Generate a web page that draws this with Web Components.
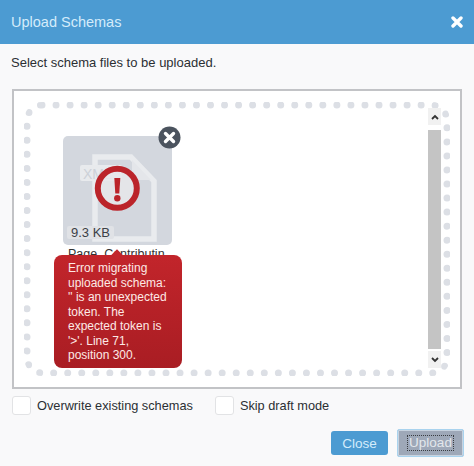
<!DOCTYPE html>
<html>
<head>
<meta charset="utf-8">
<title>Upload Schemas</title>
<style>
html, body { margin: 0; padding: 0; background: #f9f9fa; }
body { font-family: "Liberation Sans", Arial, sans-serif; }
</style>
</head>
<body>
<upload-dialog heading="Upload Schemas">
  <span slot="intro">Select schema files to be uploaded.</span>
  <drop-zone slot="zone">
    <file-tile size="9.3 KB" name="Page_Contributin"></file-tile>
    <error-tip>Error migrating<br>uploaded schema:<br>'' is an unexpected<br>token. The<br>expected token is<br>'&gt;'. Line 71,<br>position 300.</error-tip>
  </drop-zone>
  <check-option slot="options">Overwrite existing schemas</check-option>
  <check-option slot="options">Skip draft mode</check-option>
  <dlg-button slot="actions">Close</dlg-button>
  <dlg-button slot="actions" disabled-look>Upload</dlg-button>
</upload-dialog>

<script>
const dialogTemplate = document.createElement('template');
dialogTemplate.innerHTML = `
<style>
:host {
    display: flex;
    flex-direction: column;
    width: 474px;
    height: 466px;
    box-sizing: border-box;
    background: #f9f9fa;
    color: #2b2f33;
    font-size: 13px;
    overflow: hidden;
}
.head {
    height: 44px;
    flex: none;
    background: #4c9bd2;
    color: #d4ecfb;
    font-size: 14.5px;
    display: flex;
    align-items: center;
    justify-content: space-between;
    padding: 0 11px;
}
.head svg { width: 12px; height: 12px; }
.intro { height: 45px; flex: none; padding: 10px 11px 0; box-sizing: border-box; line-height: 17px; }
.zone { display: block; height: 300px; flex: none; margin: 0 12px; }
.options { display: flex; gap: 22px; height: 19px; margin: 7px 12px 0; flex: none; font-size: 12.75px; }
.actions { display: flex; justify-content: flex-end; align-items: center; gap: 9px; margin: 14px 10px 0 0; flex: none; }
</style>
<div class="head">
    <span class="title"></span>
    <svg viewBox="0 0 12 12"><path d="M2 2l8 8M10 2l-8 8" stroke="#fff" stroke-width="3.4" stroke-linecap="round"/></svg>
</div>
<div class="intro"><slot name="intro"></slot></div>
<div class="zone"><slot name="zone"></slot></div>
<div class="options"><slot name="options"></slot></div>
<div class="actions"><slot name="actions"></slot></div>
`;

class UploadDialog extends HTMLElement {
    constructor() {
        super();
        this.attachShadow({ mode: 'open' });
        this.shadowRoot.appendChild(dialogTemplate.content.cloneNode(true));
        this.shadowRoot.querySelector('.title').textContent = this.getAttribute('heading');
    }
}

const zoneTemplate = document.createElement('template');
zoneTemplate.innerHTML = `
<style>
:host {
    display: block;
    position: relative;
    height: 300px;
    box-sizing: border-box;
    border: 2px solid #c2c3c6;
    background: #fff;
    padding: 11px 10px 11px 10px;
}
.dots {
    height: 100%;
    box-sizing: border-box;
    border: 7px dotted #dcdfe5;
    border-radius: 18px;
    display: flex;
    align-items: flex-start;
    justify-content: space-between;
}
.content { position: relative; width: 120px; margin: 27px 0 0 32px; }
</style>
<div class="dots">
    <div class="content"><slot></slot></div>
    <scroll-bar></scroll-bar>
</div>
`;

class DropZone extends HTMLElement {
    constructor() {
        super();
        this.attachShadow({ mode: 'open' });
        this.shadowRoot.appendChild(zoneTemplate.content.cloneNode(true));
    }
}

const scrollTemplate = document.createElement('template');
scrollTemplate.innerHTML = `
<style>
:host {
    display: flex;
    flex-direction: column;
    flex: none;
    width: 13px;
    height: 260px;
    margin: -1px 2px 0 0;
    position: relative;
    z-index: 1;
}
.btn { height: 17px; flex: none; background: #f1f1f1; display: flex; align-items: center; justify-content: center; }
.btn svg { width: 8px; height: 6px; }
.track { flex: 1; padding: 5px 0 2px; display: flex; }
.thumb { flex: 1; background: #c4c4c4; }
</style>
<div class="btn"><svg viewBox="0 0 8 6"><path d="M1 5l3-3 3 3" fill="none" stroke="#333" stroke-width="1.8"/></svg></div>
<div class="track"><div class="thumb"></div></div>
<div class="btn"><svg viewBox="0 0 8 6"><path d="M1 1l3 3 3-3" fill="none" stroke="#333" stroke-width="1.8"/></svg></div>
`;

class ScrollBar extends HTMLElement {
    constructor() {
        super();
        this.attachShadow({ mode: 'open' });
        this.shadowRoot.appendChild(scrollTemplate.content.cloneNode(true));
    }
}

const tileTemplate = document.createElement('template');
tileTemplate.innerHTML = `
<style>
:host { display: block; width: 109px; color: #333; }
.tile {
    position: relative;
    width: 109px;
    height: 109px;
    background: #d3d7de;
    border-radius: 5px;
}
.art { position: absolute; left: 0; top: 0; width: 109px; height: 109px; }
.size {
    position: absolute;
    left: 4px;
    bottom: 6px;
    background: #e0e2e6;
    border-radius: 2px;
    padding: 0 4px;
    line-height: 13px;
    font-size: 13px;
    color: #3c4046;
}
.remove { position: absolute; left: 95px; top: -10px; width: 23px; height: 23px; }
.xml { font: 14px "Liberation Sans", Arial, sans-serif; fill: #cdd1d8; }
.name { margin: 1px 0 0 5px; white-space: nowrap; line-height: 16px; font-size: 12.5px; }
</style>
<div class="tile">
    <svg class="art" viewBox="0 0 109 109">
        <path d="M32 103V21h36l23 24v58z" fill="none" stroke="#e9ebee" stroke-width="5.5"/>
        <path d="M69 24l19 20H69z" fill="#e4e6ea"/>
        <rect x="17" y="29" width="42" height="16" rx="2" fill="#e8eaed"/>
        <text class="xml" x="20" y="42.5">XML</text>
        <circle cx="54.3" cy="52.3" r="19.5" fill="#e6e7ea" fill-opacity=".85" stroke="#bb242a" stroke-width="6"/>
        <path d="M51.3 42h6l-1 15.5h-4z" fill="#bb242a"/>
        <circle cx="54.3" cy="62.2" r="3.2" fill="#bb242a"/>
    </svg>
    <span class="size"></span>
    <svg class="remove" viewBox="0 0 23 23">
        <circle cx="11.5" cy="11.5" r="11" fill="#4b535e"/>
        <path d="M7.5 7.5l8 8M15.5 7.5l-8 8" stroke="#fff" stroke-width="3.4" stroke-linecap="round"/>
    </svg>
</div>
<div class="name"></div>
`;

class FileTile extends HTMLElement {
    constructor() {
        super();
        this.attachShadow({ mode: 'open' });
        this.shadowRoot.appendChild(tileTemplate.content.cloneNode(true));
        this.shadowRoot.querySelector('.size').textContent = this.getAttribute('size');
        this.shadowRoot.querySelector('.name').textContent = this.getAttribute('name');
    }
}

const tipTemplate = document.createElement('template');
tipTemplate.innerHTML = `
<style>
:host {
    position: absolute;
    left: -9px;
    top: 119px;
    width: 128px;
    box-sizing: border-box;
    padding: 6px 10px 5px 14px;
    background: linear-gradient(#c2252b, #a91d23);
    border-radius: 8px;
    color: #fde9e6;
    font-size: 12px;
    line-height: 14.5px;
}
.caret {
    position: absolute;
    left: 59px;
    top: -4px;
    width: 8px;
    height: 8px;
    background: #c2252b;
    transform: rotate(45deg);
}
</style>
<div class="caret"></div>
<slot></slot>
`;

class ErrorTip extends HTMLElement {
    constructor() {
        super();
        this.attachShadow({ mode: 'open' });
        this.shadowRoot.appendChild(tipTemplate.content.cloneNode(true));
    }
}

const checkTemplate = document.createElement('template');
checkTemplate.innerHTML = `
<style>
:host { display: flex; align-items: center; gap: 6px; line-height: 19px; }
.box {
    width: 19px;
    height: 19px;
    box-sizing: border-box;
    background: #fff;
    border: 1px solid #e2e3e5;
    border-radius: 3px;
}
</style>
<div class="box"></div>
<slot></slot>
`;

class CheckOption extends HTMLElement {
    constructor() {
        super();
        this.attachShadow({ mode: 'open' });
        this.shadowRoot.appendChild(checkTemplate.content.cloneNode(true));
    }
}

const buttonTemplate = document.createElement('template');
buttonTemplate.innerHTML = `
<style>
:host { display: block; font-size: 13.5px; }
.btn {
    height: 24px;
    min-width: 57px;
    box-sizing: border-box;
    border-radius: 3px;
    background: #4c9bd2;
    color: #d4ecfb;
    display: flex;
    align-items: center;
    justify-content: center;
}
:host([disabled-look]) .btn {
    width: 67px;
    height: 28px;
    border: 1px solid #a9d3ee;
    border-radius: 2px;
    background: #9ea8b8;
    box-shadow: inset 0 0 0 1px #c7d3e0;
    color: #e3e7ec;
}
:host([disabled-look]) span { outline: 1px dotted #3a3d42; line-height: 14px; padding: 0 1px; }
</style>
<div class="btn"><span><slot></slot></span></div>
`;

class DlgButton extends HTMLElement {
    constructor() {
        super();
        this.attachShadow({ mode: 'open' });
        this.shadowRoot.appendChild(buttonTemplate.content.cloneNode(true));
    }
}

customElements.define('upload-dialog', UploadDialog);
customElements.define('drop-zone', DropZone);
customElements.define('scroll-bar', ScrollBar);
customElements.define('file-tile', FileTile);
customElements.define('error-tip', ErrorTip);
customElements.define('check-option', CheckOption);
customElements.define('dlg-button', DlgButton);
</script>
</body>
</html>
